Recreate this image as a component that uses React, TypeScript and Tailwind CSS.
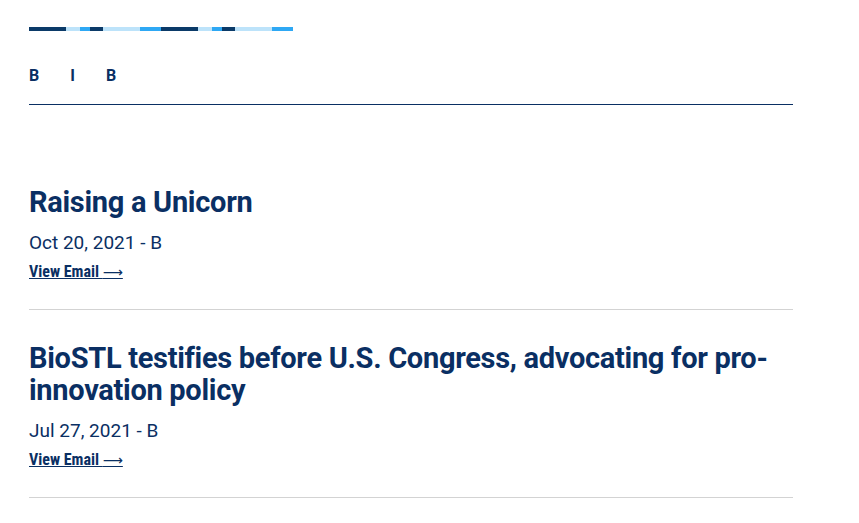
const SEGMENTS = [
  { w: 37, c: "bg-[#0b3a68]" },
  { w: 14, c: "bg-[#bde3fa]" },
  { w: 10, c: "bg-[#2ea8f4]" },
  { w: 13, c: "bg-[#0b3a68]" },
  { w: 37, c: "bg-[#bde3fa]" },
  { w: 21, c: "bg-[#2ea8f4]" },
];

const POSTS = [
  { title: "Raising a Unicorn", date: "Oct 20, 2021 - B" },
  {
    title: "BioSTL testifies before U.S. Congress, advocating for pro-innovation policy",
    date: "Jul 27, 2021 - B",
  },
];

export default function App() {
  return (
    <div className="min-h-screen bg-white font-['Roboto',sans-serif] text-[#0a2f63]">
      <div className="w-[764px] ml-[29px] pt-[27px]">
        {/* striped accent bar */}
        <div className="flex h-[4px]">
          {[0, 1].map((r) =>
            SEGMENTS.map((s, i) => (
              <div key={`${r}-${i}`} className={s.c} style={{ width: s.w }} />
            ))
          )}
        </div>

        <div className="flex gap-[31px] mt-[35px] text-[16px] font-bold leading-[20px]">
          <span>B</span>
          <span>I</span>
          <span>B</span>
        </div>
        <div className="h-px bg-[#0a2f63] mt-[18px]" />

        <div className="mt-[81px]">
          {POSTS.map((p) => (
            <div key={p.title} className="border-b border-[#d3d3d3] pb-[25px] mb-[32px]">
              <h2 className="text-[29px] font-bold leading-[32px] tracking-[-0.3px] w-[745px]">
                {p.title}
              </h2>
              <div className="mt-[13px] text-[19px] leading-[24px]">{p.date}</div>
              <a href="#" className="inline-block mt-[7px] text-[16px] font-bold underline leading-[20px] font-['Roboto_Condensed','Roboto',sans-serif]">
                View Email <span className="font-['DejaVu_Sans',sans-serif] font-normal text-[14px]">⟶</span>
              </a>
            </div>
          ))}
        </div>
      </div>
    </div>
  );
}
